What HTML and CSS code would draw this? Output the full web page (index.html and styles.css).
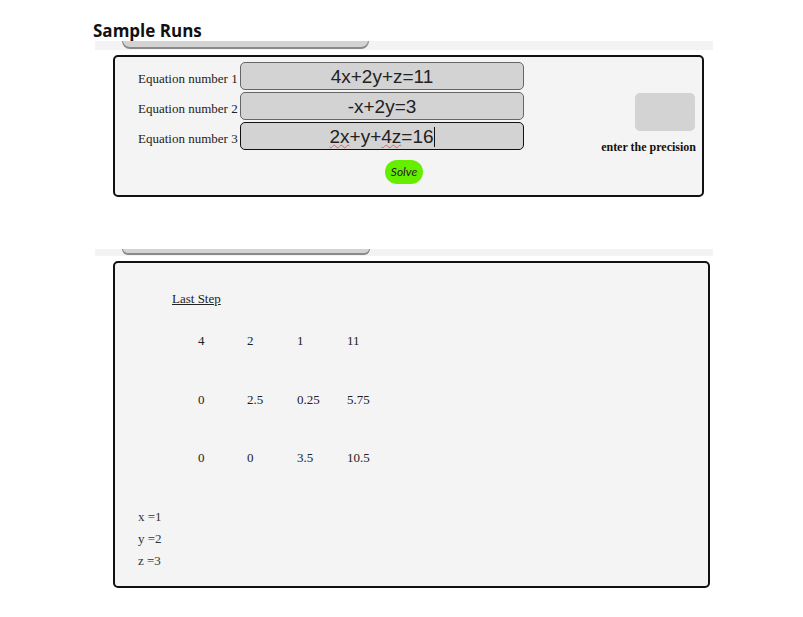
FILE: index.html
```html
<!DOCTYPE html>
<html>
<head>
<meta charset="utf-8">
<link rel="stylesheet" href="styles.css">
</head>
<body>
<div class="page">
  <h2 class="title">Sample Runs</h2>
  <div class="strip"><div class="strip-tab"></div></div>
  <div class="panel panel-form">
    <div class="form-left">
      <div class="eq-row">
        <span class="eq-label">Equation number 1</span>
        <div class="eq-input">4x+2y+z=11</div>
      </div>
      <div class="eq-row">
        <span class="eq-label">Equation number 2</span>
        <div class="eq-input">-x+2y=3</div>
      </div>
      <div class="eq-row">
        <span class="eq-label">Equation number 3</span>
        <div class="eq-input focused"><span class="spell">2x</span>+y+<span class="spell">4z</span>=16<span class="caret"></span></div>
      </div>
      <div class="solve-row"><span class="solve">Solve</span></div>
    </div>
    <div class="form-right">
      <div class="precision-box"></div>
      <div class="precision-label">enter the precision</div>
    </div>
  </div>
  <div class="strip strip-2"><div class="strip-tab strip-tab-2"></div></div>
  <div class="panel panel-result">
    <div class="step-block">
      <div class="step-title">Last Step</div>
      <div class="matrix">
        <span>4</span><span>2</span><span>1</span><span>11</span>
        <span>0</span><span>2.5</span><span>0.25</span><span>5.75</span>
        <span>0</span><span>0</span><span>3.5</span><span>10.5</span>
      </div>
    </div>
    <div class="answers">
      <div>x =1</div>
      <div>y =2</div>
      <div>z =3</div>
    </div>
  </div>
</div>
</body>
</html>
```
FILE: styles.css
```css
html, body {
  margin: 0;
  padding: 0;
  background: #ffffff;
}
body {
  font-family: "Liberation Serif", "Times New Roman", serif;
  color: #111;
}
.page {
  padding: 21px 0 0 93px;
  width: 640px;
}
.title {
  margin: 0;
  font-family: "Open Sans", sans-serif;
  font-weight: 700;
  font-size: 17px;
  line-height: 20px;
  color: #111;
}
.strip {
  margin: 0 0 0 2px;
  width: 618px;
  height: 9px;
  background: #f3f3f3;
}
.strip-tab {
  margin-left: 27px;
  width: 245px;
  height: 6px;
  background: #d3d3d3;
  border: 1px solid #8a8a8a;
  border-top: none;
  border-bottom-width: 2px;
  border-radius: 0 0 8px 8px;
}
.panel {
  margin-left: 20px;
  background: #f4f4f4;
  border: 2px solid #111;
  border-radius: 5px;
  box-sizing: border-box;
}
.panel-form {
  margin-top: 5px;
  width: 591px;
  height: 142px;
  display: flex;
}
.form-left {
  padding: 5px 0 0 23px;
  display: flex;
  flex-direction: column;
  gap: 2px;
}
.eq-row {
  display: flex;
  align-items: center;
}
.eq-label {
  width: 102px;
  font-size: 13px;
  color: #222;
  padding-top: 5px;
}
.eq-input {
  width: 284px;
  height: 28px;
  box-sizing: border-box;
  background: #d3d3d3;
  border: 1px solid #666;
  border-radius: 5px;
  font-family: "Liberation Sans", Arial, sans-serif;
  font-size: 19px;
  line-height: 27px;
  text-align: center;
  color: #222;
}
.eq-input.focused {
  border: 1.5px solid #111;
}
.spell {
  text-decoration: underline wavy #e06060;
  text-decoration-thickness: 1px;
  text-underline-offset: 1px;
}
.caret {
  display: inline-block;
  width: 1px;
  height: 20px;
  background: #111;
  vertical-align: -4px;
}
.solve-row {
  margin-top: 8px;
  padding-left: 247px;
}
.solve {
  display: inline-block;
  width: 38px;
  height: 24px;
  line-height: 24px;
  border-radius: 12px;
  background: #66ee00;
  text-align: center;
  font-family: Lato, sans-serif;
  font-style: italic;
  font-size: 12px;
  color: #222;
}
.form-right {
  margin-left: auto;
  padding: 36px 6px 0 0;
  display: flex;
  flex-direction: column;
  align-items: flex-end;
}
.precision-box {
  width: 60px;
  height: 38px;
  background: #d3d3d3;
  border-radius: 5px;
  margin-right: 1px;
}
.precision-label {
  margin-top: 9px;
  font-weight: 700;
  font-size: 12px;
  line-height: 14px;
  color: #111;
}
.strip-2 {
  margin-top: 53px;
  height: 7px;
}
.strip-tab-2 {
  width: 246px;
  height: 4px;
  margin-top: -1px;
}
.panel-result {
  margin-top: 5px;
  width: 597px;
  height: 327px;
  padding: 28px 0 0 0;
}
.step-block {
  padding-left: 57px;
}
.step-title {
  font-size: 13px;
  line-height: 16px;
  text-decoration: underline;
  color: #222;
}
.matrix {
  margin: 5px 0 0 26px;
  display: grid;
  grid-template-columns: 49px 50px 50px 50px;
  grid-auto-rows: 58.5px;
  align-items: center;
  font-size: 13px;
  color: #222;
}
.matrix span {
  line-height: 14px;
}
.answers {
  margin: 18px 0 0 23px;
  font-size: 13px;
  line-height: 22px;
  color: #333;
}
```
